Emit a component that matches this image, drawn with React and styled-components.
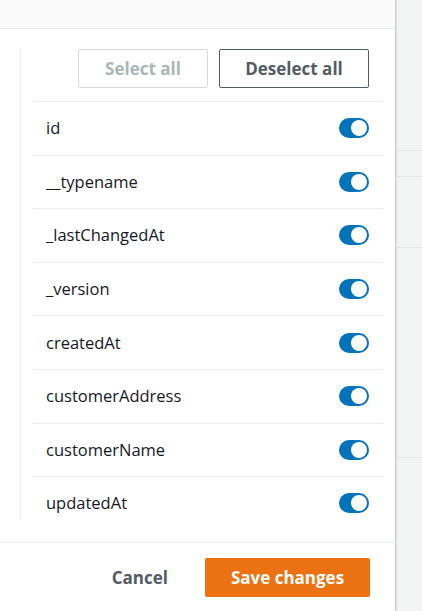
import React from 'react';
import styled, { createGlobalStyle } from 'styled-components';

const GlobalStyle = createGlobalStyle`
  body {
    margin: 0;
    background: #f2f3f3;
    font-family: "Open Sans", "Noto Sans", Arial, sans-serif;
  }
`;

const Page = styled.div`
  display: flex;
  height: 611px;
  overflow: hidden;
  background: #f2f3f3;
`;

const Modal = styled.div`
  width: 395px;
  flex-shrink: 0;
  display: flex;
  flex-direction: column;
  background: #fff;
  border-right: 1px solid #c9cccc;
  box-shadow: 1px 0 1px rgba(0, 0, 0, 0.06);
`;

const Header = styled.div`
  height: 28px;
  background: #fafafa;
  border-bottom: 1px solid #eaeded;
`;

const Body = styled.div`
  padding: 19px 12px 0 20px;
`;

const Panel = styled.div`
  height: 472px;
  overflow: hidden;
  border-left: 1px solid #eaeded;
  padding-left: 12px;
`;

const Toolbar = styled.div`
  display: flex;
  justify-content: flex-end;
  gap: 11px;
  padding: 1px 14px 0 0;
  margin-bottom: 13px;
`;

const Button = styled.button`
  height: 39px;
  padding: 0 16px;
  border-radius: 2px;
  font-family: inherit;
  font-size: 17px;
  font-weight: 700;
  background: #fff;
  cursor: pointer;
  border: 1px solid ${(p) => (p.disabled ? '#d5dbdb' : '#545b64')};
  color: ${(p) => (p.disabled ? '#aab7b8' : '#545b64')};
  width: ${(p) => p.$w}px;
`;

const Row = styled.div`
  display: flex;
  align-items: center;
  justify-content: space-between;
  height: 52.6px;
  padding: 0 14px 0 13px;
  border-top: 1px solid #eaeded;
`;

const Label = styled.span`
  font-size: 16.5px;
  color: #16191f;
  padding-bottom: 1px;
`;

const Toggle = styled.span`
  width: 30px;
  height: 20px;
  border-radius: 10px;
  background: ${(p) => (p.$on ? '#0073bb' : '#aab7b8')};
  display: flex;
  align-items: center;
  justify-content: ${(p) => (p.$on ? 'flex-end' : 'flex-start')};
  padding: 0 2px;
  box-sizing: border-box;

  &::after {
    content: '';
    width: 16px;
    height: 16px;
    border-radius: 50%;
    background: #fff;
  }
`;

const Footer = styled.div`
  margin-top: 22px;
  border-top: 1px solid #eaeded;
  display: flex;
  justify-content: flex-end;
  align-items: center;
  gap: 19px;
  padding: 15px 25px 0 0;
`;

const LinkButton = styled.button`
  height: 39px;
  padding: 0 18px;
  border: none;
  background: none;
  font-family: inherit;
  font-size: 17px;
  font-weight: 700;
  color: #545b64;
  cursor: pointer;
`;

const PrimaryButton = styled.button`
  height: 39px;
  width: 165px;
  border: none;
  border-radius: 2px;
  background: #ec7211;
  color: #fff;
  font-family: inherit;
  font-size: 17px;
  font-weight: 700;
  cursor: pointer;
`;

const Backdrop = styled.div`
  flex: 1;
  display: flex;
  flex-direction: column;
`;

const BackdropRow = styled.div`
  height: ${(p) => p.$h}px;
  flex-shrink: 0;
  border-bottom: 1px solid #e6e8e8;
`;

const fields = [
  'id',
  '__typename',
  '_lastChangedAt',
  '_version',
  'createdAt',
  'customerAddress',
  'customerName',
  'updatedAt',
];

export default function App() {
  return (
    <>
      <GlobalStyle />
      <Page>
        <Modal>
          <Header />
          <Body>
            <Panel>
              <Toolbar>
                <Button disabled $w={130}>Select all</Button>
                <Button $w={150}>Deselect all</Button>
              </Toolbar>
              {fields.map((f) => (
                <Row key={f}>
                  <Label>{f}</Label>
                  <Toggle $on />
                </Row>
              ))}
            </Panel>
          </Body>
          <Footer>
            <LinkButton>Cancel</LinkButton>
            <PrimaryButton>Save changes</PrimaryButton>
          </Footer>
        </Modal>
        <Backdrop>
          <BackdropRow $h={150} />
          <BackdropRow $h={25} />
          <BackdropRow $h={70} />
          <BackdropRow $h={209} />
        </Backdrop>
      </Page>
    </>
  );
}
